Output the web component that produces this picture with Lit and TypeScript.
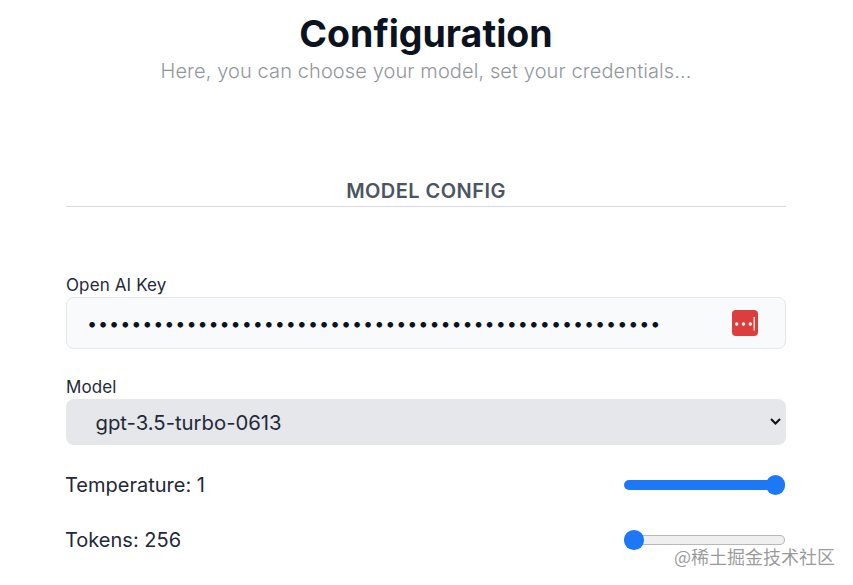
import { LitElement, html, css } from "lit";
import { customElement } from "lit/decorators.js";

@customElement("app-root")
export class AppRoot extends LitElement {
  static styles = css`
    :host { display: block; position: relative; width: 853px; height: 585px; overflow: hidden; background: #fff; font-family: Inter, "Noto Sans", sans-serif; color: #111827; }
    .page { padding: 12px 67px 0 66px; display: flex; flex-direction: column; }
    .head { display: flex; flex-direction: column; align-items: center; }
    h1 { margin: 0; font-size: 37.5px; line-height: 44px; font-weight: 700; color: #0b1220; }
    .sub { margin: 0; font-size: 20px; line-height: 30px; font-weight: 300; color: #93979d; letter-spacing: 0.1px; }
    .section { margin-top: 90px; border-bottom: 1px solid #d8dadf; text-align: center; font-size: 20px; line-height: 30px; font-weight: 600; color: #4b5563; letter-spacing: 0.45px; }
    .field { display: flex; flex-direction: column; }
    .key { margin-top: 66px; }
    .model { margin-top: 26px; }
    label { font-size: 17px; line-height: 24px; color: #1f2937; letter-spacing: 0.12px; }
    .keybox { position: relative; height: 52px; box-sizing: border-box; border: 1px solid #e5e7eb; border-radius: 8px; background: #f9fafb; display: flex; align-items: center; }
    .keybox input { flex: 1; border: 0; outline: 0; background: transparent; padding: 0 20px; font: 400 18px Inter, sans-serif; color: #0b1220; letter-spacing: 0.92px; min-width: 0; }
    .lp { position: absolute; right: 27px; top: 12px; width: 26px; height: 26px; }
    .selectbox { position: relative; display: flex; }
    select { appearance: none; -webkit-appearance: none; height: 46px; width: 100%; border: 0; border-radius: 8px; background: #e5e7eb; color: #1f2937; font: 400 20.3px Inter, sans-serif; padding: 0 29.5px; }
    .chev { position: absolute; right: 5px; top: 19px; width: 11px; height: 7px; pointer-events: none; }
    .row { display: flex; justify-content: space-between; align-items: center; height: 28px; font-size: 20px; color: #1f2937; }
    .row span { margin-left: -1px; }
    .temp { margin-top: 26px; }
    .tok { margin-top: 27px; }
    input[type="range"] { appearance: none; -webkit-appearance: none; width: 161px; height: 10px; margin: 0 0.7px 0 0; border-radius: 5px; outline: 0; }
    input[type="range"].full { background: #1d78f5; }
    input[type="range"].low { background: #efefef; box-shadow: inset 0 0 0 1px #b8b8b8; }
    input[type="range"]::-webkit-slider-thumb { -webkit-appearance: none; width: 19.5px; height: 19.5px; border-radius: 50%; background: #1d78f5; border: 0; }
    .mark { position: absolute; left: 674px; top: 544px; font: 400 18px "Noto Sans CJK SC", sans-serif; color: rgba(120,120,120,0.75); line-height: 24px; white-space: nowrap; }
  `;
  render() {
    return html`
      <div class="page">
        <div class="head">
          <h1>Configuration</h1>
          <p class="sub">Here, you can choose your model, set your credentials...</p>
        </div>
        <div class="section">MODEL CONFIG</div>
        <div class="field key">
          <label>Open AI Key</label>
          <div class="keybox">
            <input type="password" value="aaaaaaaaaaaaaaaaaaaaaaaaaaaaaaaaaaaaaaaaaaaaaaaaaaaa" />
            <svg class="lp" viewBox="0 0 26 26">
              <rect width="26" height="26" rx="4" fill="#dc3d3d" />
              <circle cx="4.7" cy="14" r="1.7" fill="#fff" />
              <circle cx="11.5" cy="14" r="1.7" fill="#fff" />
              <circle cx="18.3" cy="14" r="1.7" fill="#fff" />
              <rect x="21.6" y="7" width="1.2" height="13.5" fill="#fff" />
            </svg>
          </div>
        </div>
        <div class="field model">
          <label>Model</label>
          <div class="selectbox">
            <select><option>gpt-3.5-turbo-0613</option></select>
            <svg class="chev" viewBox="0 0 11 7"><path d="M1 1l4.5 4.5L10 1" fill="none" stroke="#111" stroke-width="2" /></svg>
          </div>
        </div>
        <div class="row temp"><span>Temperature: 1</span><input class="full" type="range" min="0" max="1" step="0.1" .value=${"1"} /></div>
        <div class="row tok"><span>Tokens: 256</span><input class="low" type="range" min="256" max="4096" .value=${"256"} /></div>
      </div>
      <div class="mark">@稀土掘金技术社区</div>
    `;
  }
}
